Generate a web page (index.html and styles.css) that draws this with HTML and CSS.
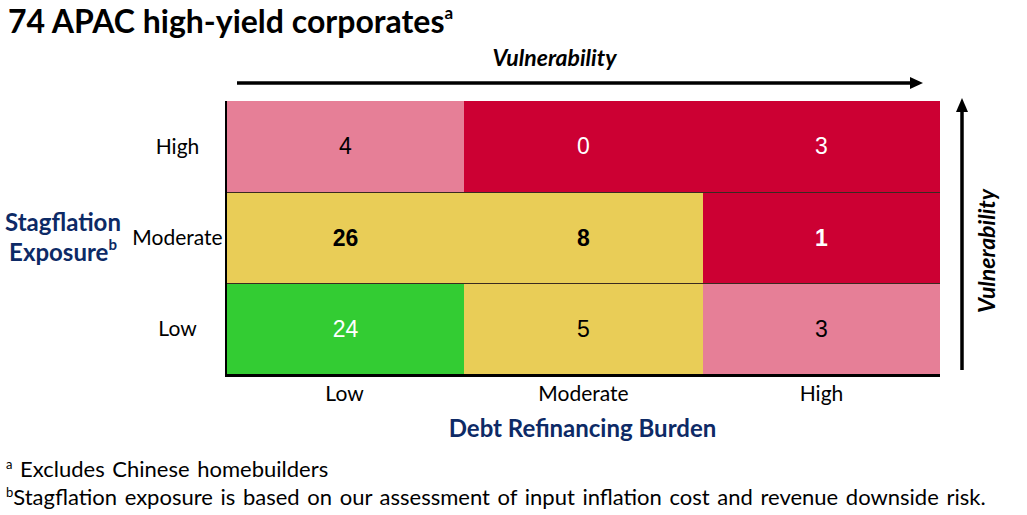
FILE: index.html
```html
<!DOCTYPE html>
<html>
<head>
<meta charset="utf-8">
<link rel="stylesheet" href="styles.css">
</head>
<body>
<h1 class="title">74 APAC high-yield corporates<sup>a</sup></h1>
<div class="chart">
  <div class="top-axis">
    <div class="axis-word">Vulnerability</div>
    <svg class="h-arrow" width="700" height="14" viewBox="0 0 700 14">
      <line x1="0" y1="7" x2="676" y2="7" stroke="#000" stroke-width="3.5"/>
      <polygon points="673,1 686,7 673,13" fill="#000"/>
    </svg>
  </div>

  <div class="y-title">Stagflation<br>Exposure<sup>b</sup></div>
  <div class="row-labels">
    <div class="row-label">High</div>
    <div class="row-label">Moderate</div>
    <div class="row-label">Low</div>
  </div>

  <div class="matrix">
    <div class="cell pink">4</div>
    <div class="cell red">0</div>
    <div class="cell red">3</div>
    <div class="cell yellow sep bold">26</div>
    <div class="cell yellow sep bold">8</div>
    <div class="cell red sep bold">1</div>
    <div class="cell green sep">24</div>
    <div class="cell yellow sep">5</div>
    <div class="cell pink sep">3</div>
  </div>

  <div class="right-axis">
    <svg class="v-arrow" width="14" height="276" viewBox="0 0 14 276">
      <line x1="7" y1="12" x2="7" y2="272" stroke="#000" stroke-width="3.5"/>
      <polygon points="1,14 7,0 13,14" fill="#000"/>
    </svg>
    <div class="v-word">Vulnerability</div>
  </div>

  <div class="col-labels">
    <div class="col-label">Low</div>
    <div class="col-label">Moderate</div>
    <div class="col-label">High</div>
  </div>
  <div class="x-title">Debt Refinancing Burden</div>
</div>
<div class="notes">
  <p class="note"><sup>a</sup> Excludes Chinese homebuilders</p>
  <p class="note"><sup>b</sup>Stagflation exposure is based on our assessment of input inflation cost and revenue downside risk.</p>
</div>
</body>
</html>
```

FILE: styles.css
```css
* { box-sizing: border-box; }
html, body {
  margin: 0;
  padding: 0;
  background: #fff;
  width: 1027px;
  height: 515px;
  overflow: hidden;
  font-family: Lato, "Open Sans", sans-serif;
  color: #000;
}
.title {
  margin: 0;
  padding: 3px 0 0 8px;
  height: 40px;
  font-size: 32px;
  font-weight: 700;
  line-height: 36px;
}
.title sup {
  font-size: 17px;
  font-weight: 700;
  line-height: 0;
  vertical-align: 14px;
}
.chart {
  display: grid;
  grid-template-columns: 130px 95px 715px 87px;
  grid-template-rows: 61px 276px 34px 34px;
}
.top-axis {
  grid-column: 3;
  grid-row: 1;
  display: flex;
  flex-direction: column;
  align-items: flex-start;
}
.axis-word {
  align-self: stretch;
  text-align: center;
  padding-right: 56px;
  font-size: 23px;
  font-weight: 700;
  font-style: italic;
  line-height: 26px;
  margin-top: 4px;
}
.h-arrow {
  display: block;
  margin: 6px 0 0 12px;
}
.y-title {
  grid-column: 1;
  grid-row: 2;
  align-self: center;
  text-align: center;
  color: #0d2a66;
  font-size: 24px;
  font-weight: 700;
  line-height: 30px;
  margin-top: -4px;
  padding-right: 4px;
}
.y-title sup {
  font-size: 15px;
  line-height: 0;
  vertical-align: 11px;
}
.row-labels {
  grid-column: 2;
  grid-row: 2;
  display: grid;
  grid-template-rows: 91px 91px 91px;
}
.row-label {
  display: flex;
  align-items: center;
  justify-content: center;
  font-size: 21px;
  padding-bottom: 2px;
}
.matrix {
  grid-column: 3;
  grid-row: 2;
  display: grid;
  grid-template-columns: 237px 239px 237px;
  grid-template-rows: 91px 91px 91px;
  border-left: 2px solid #000;
  border-bottom: 3px solid #000;
}
.cell {
  display: flex;
  align-items: center;
  justify-content: center;
  font-family: "Liberation Sans", Arial, sans-serif;
  font-size: 23px;
}
.cell.sep { border-top: 1px solid #3a2a20; }
.cell.bold { font-weight: 700; }
.pink { background: #e67f97; color: #000; }
.red { background: #cc0033; color: #fff; }
.yellow { background: #e9cd57; color: #000; }
.green { background: #33cc33; color: #fff; }
.right-axis {
  grid-column: 4;
  grid-row: 2;
  display: flex;
  align-items: flex-start;
  margin-top: -3px;
}
.v-arrow {
  display: block;
  margin-left: 15px;
}
.v-word {
  writing-mode: vertical-rl;
  transform: rotate(180deg);
  font-size: 23px;
  font-weight: 700;
  font-style: italic;
  line-height: 26px;
  margin-left: 4px;
  align-self: center;
  margin-top: 26px;
}
.col-labels {
  grid-column: 3;
  grid-row: 3;
  display: grid;
  grid-template-columns: 239px 239px 237px;
  align-items: center;
  margin-top: -3px;
}
.col-label {
  text-align: center;
  font-size: 21px;
}
.x-title {
  grid-column: 3;
  grid-row: 4;
  text-align: center;
  color: #0d2a66;
  font-size: 24px;
  font-weight: 700;
  line-height: 30px;
  padding-top: 2px;
}
.notes {
  padding: 10px 0 0 6px;
}
.note {
  margin: 0;
  font-size: 22px;
  line-height: 28px;
  letter-spacing: 0;
  word-spacing: 2px;
}
.note sup {
  font-size: 13px;
  vertical-align: 8px;
  line-height: 0;
}
```
